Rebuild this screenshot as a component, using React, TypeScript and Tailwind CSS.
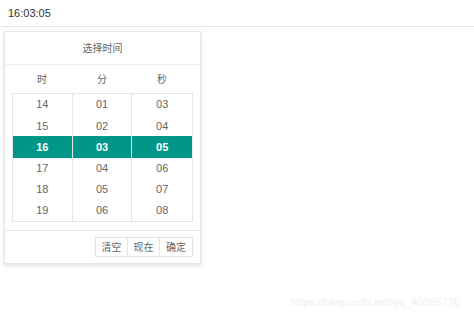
import React from "react";

const hours = ["14", "15", "16", "17", "18", "19"];
const mins = ["01", "02", "03", "04", "05", "06"];
const secs = ["03", "04", "05", "06", "07", "08"];

function Col({ items, last }: { items: string[]; last?: boolean }) {
  return (
    <div className={`flex flex-col w-[60px] ${last ? "" : "border-r border-[#e6e6e6]"}`}>
      {items.map((v, i) => (
        <div
          key={i}
          className={`h-[21.5px] flex items-center justify-center ${
            i === 2 ? "bg-[#009688] text-white font-bold" : "text-[#666]"
          }`}
        >
          {v}
        </div>
      ))}
    </div>
  );
}

export default function App() {
  return (
    <div
      className="relative w-[474px] h-[320px] bg-white overflow-hidden"
      style={{ fontFamily: '"Liberation Sans", "Noto Sans CJK SC", sans-serif' }}
    >
      <div className="h-[27px] border-b border-[#e6e6e6] flex items-center pl-[8px] text-[11px] text-[#333]">
        16:03:05
      </div>
      <div className="ml-[4px] mt-[4px] w-[197px] h-[233px] border border-[#e6e6e6] shadow-[0_2px_4px_rgba(0,0,0,0.12)] flex flex-col text-[11px]">
        <div className="h-[33px] border-b border-[#eee] flex items-center justify-center text-[#666] text-[10px]">
          选择时间
        </div>
        <div className="flex px-[7px] h-[28px] items-center text-[#666] text-[10px]">
          <div className="w-[60px] text-center">时</div>
          <div className="w-[60px] text-center">分</div>
          <div className="w-[60px] text-center">秒</div>
        </div>
        <div className="mx-[7px] border border-[#e6e6e6] flex h-[129px] pt-[0px]">
          <Col items={hours} />
          <Col items={mins} />
          <Col items={secs} last />
        </div>
        <div className="mt-[8px] border-t border-[#e6e6e6] flex-1 flex items-center justify-end pr-[7px]">
          <div className="flex border border-[#e2e2e2] h-[20px] text-[10px] text-[#666]">
            <div className="w-[32px] flex items-center justify-center border-r border-[#e2e2e2]">清空</div>
            <div className="w-[32px] flex items-center justify-center border-r border-[#e2e2e2]">现在</div>
            <div className="w-[32px] flex items-center justify-center">确定</div>
          </div>
        </div>
      </div>
      <div className="absolute left-[291px] top-[294px] text-[11px] text-[#f0f0f0]">
        https://blog.csdn.net/qq_40065776
      </div>
    </div>
  );
}
